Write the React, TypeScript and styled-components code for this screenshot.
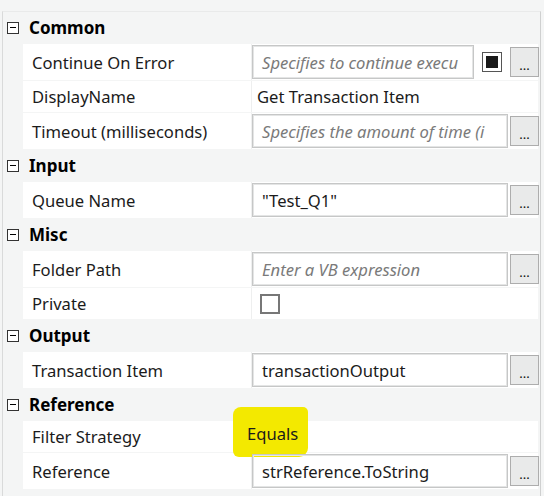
import React from 'react'
import styled, { createGlobalStyle } from 'styled-components'

const GlobalStyle = createGlobalStyle`
  html, body {
    margin: 0;
    padding: 0;
    background: #f4f5f5;
  }
  body {
    font-family: 'Noto Sans', 'Open Sans', sans-serif;
    font-size: 16.6px;
    color: #1b1b1b;
  }
`

const Panel = styled.div`
  width: 544px;
  height: 496px;
  box-sizing: border-box;
  padding: 11px 3px 0 2px;
  background: #f4f5f5;
  overflow: hidden;
`

const Sheet = styled.div`
  height: 100%;
  border-left: 1px solid #d9dada;
  border-right: 1px solid #cfd0d0;
  border-top: 1px solid #e9eaea;
  display: flex;
  flex-direction: column;
`

const Header = styled.div`
  flex: none;
  height: 31px;
  margin-bottom: 1px;
  display: flex;
  align-items: center;
  gap: 10px;
  padding-left: 4px;
  font-weight: 700;
  font-size: 17px;
  color: #000;
`

const Expander = styled.span`
  width: 10px;
  height: 10px;
  border: 1px solid #333;
  background: #fff;
  display: flex;
  align-items: center;
  justify-content: center;

  &::after {
    content: '';
    width: 6px;
    height: 1px;
    background: #000;
  }
`

const Row = styled.div<{ $tall?: boolean }>`
  flex: none;
  height: ${({ $tall }) => ($tall ? '36px' : '31px')};
  margin: 0 2px 1px 20px;
  display: grid;
  grid-template-columns: 228px 1px 1fr;
  background: #fff;
`

const Name = styled.div`
  display: flex;
  align-items: center;
  padding-left: 9px;
  white-space: nowrap;
`

const Divider = styled.div`
  background: #eeefef;
`

const Value = styled.div`
  position: relative;
  display: flex;
  align-items: center;
  gap: 2px;
  min-width: 0;
`

const PlainText = styled.span`
  padding-left: 5px;
  white-space: nowrap;
`

const InputBox = styled.div<{ $placeholder?: boolean }>`
  flex: 1;
  min-width: 0;
  height: 34px;
  box-sizing: border-box;
  border: 1px solid #c6c7c7;
  box-shadow: inset 0 0 0 1px #e4e5e5;
  display: flex;
  align-items: center;
  padding-left: 9px;
  white-space: nowrap;
  overflow: hidden;
  font-style: ${({ $placeholder }) => ($placeholder ? 'italic' : 'normal')};
  color: ${({ $placeholder }) => ($placeholder ? '#7a7a7a' : '#1b1b1b')};
`

const EllipsisButton = styled.button`
  flex: none;
  width: 29px;
  height: 30px;
  margin: 0 -1px 0 0;
  padding: 0 0 4px;
  box-sizing: border-box;
  border: 1px solid #adadad;
  background: #e9eaea;
  font-family: inherit;
  font-size: 13px;
  line-height: 1;
  color: #111;
  display: flex;
  align-items: flex-end;
  justify-content: center;
  cursor: pointer;
`

const Checkbox = styled.span<{ $checked?: boolean }>`
  flex: none;
  width: 20px;
  height: 20px;
  box-sizing: border-box;
  border: ${({ $checked }) => ($checked ? '1px solid #555' : '2px solid #777')};
  background: #fff;
  display: flex;
  align-items: center;
  justify-content: center;
  margin: ${({ $checked }) => ($checked ? '0 6px' : '0 0 0 8px')};

  &::after {
    content: '';
    display: ${({ $checked }) => ($checked ? 'block' : 'none')};
    width: 12px;
    height: 12px;
    background: #1a1a1a;
  }
`

const Highlight = styled.span`
  position: absolute;
  left: -19px;
  top: -14px;
  width: 75px;
  height: 50px;
  box-sizing: border-box;
  padding: 15px 0 0 14px;
  background: #f3e900;
  border-radius: 8px 5px 9px 6px;
  white-space: nowrap;
`

type Prop = {
  name: string
  kind: 'text' | 'input' | 'check' | 'highlight'
  value?: string
  placeholder?: boolean
  checkbox?: 'on' | 'off'
  button?: boolean
}

type Category = { title: string; props: Prop[] }

const categories: Category[] = [
  {
    title: 'Common',
    props: [
      { name: 'Continue On Error', kind: 'input', value: 'Specifies to continue execu', placeholder: true, checkbox: 'on', button: true },
      { name: 'DisplayName', kind: 'text', value: 'Get Transaction Item' },
      { name: 'Timeout (milliseconds)', kind: 'input', value: 'Specifies the amount of time (i', placeholder: true, button: true },
    ],
  },
  {
    title: 'Input',
    props: [{ name: 'Queue Name', kind: 'input', value: '"Test_Q1"', button: true }],
  },
  {
    title: 'Misc',
    props: [
      { name: 'Folder Path', kind: 'input', value: 'Enter a VB expression', placeholder: true, button: true },
      { name: 'Private', kind: 'check' },
    ],
  },
  {
    title: 'Output',
    props: [{ name: 'Transaction Item', kind: 'input', value: 'transactionOutput', button: true }],
  },
  {
    title: 'Reference',
    props: [
      { name: 'Filter Strategy', kind: 'highlight', value: 'Equals' },
      { name: 'Reference', kind: 'input', value: 'strReference.ToString', button: true },
    ],
  },
]

const PropValue = ({ prop }: { prop: Prop }) => {
  if (prop.kind === 'text') return <PlainText>{prop.value}</PlainText>
  if (prop.kind === 'check') return <Checkbox />
  if (prop.kind === 'highlight') return <Highlight>{prop.value}</Highlight>
  return (
    <>
      <InputBox $placeholder={prop.placeholder}>{prop.value}</InputBox>
      {prop.checkbox && <Checkbox $checked={prop.checkbox === 'on'} />}
      {prop.button && <EllipsisButton>...</EllipsisButton>}
    </>
  )
}

const App = () => (
  <>
    <GlobalStyle />
    <Panel>
      <Sheet>
        {categories.map((cat) => (
          <React.Fragment key={cat.title}>
            <Header>
              <Expander />
              {cat.title}
            </Header>
            {cat.props.map((prop) => (
              <Row key={prop.name} $tall={prop.kind === 'input'}>
                <Name>{prop.name}</Name>
                <Divider />
                <Value>
                  <PropValue prop={prop} />
                </Value>
              </Row>
            ))}
          </React.Fragment>
        ))}
      </Sheet>
    </Panel>
  </>
)

export default App
